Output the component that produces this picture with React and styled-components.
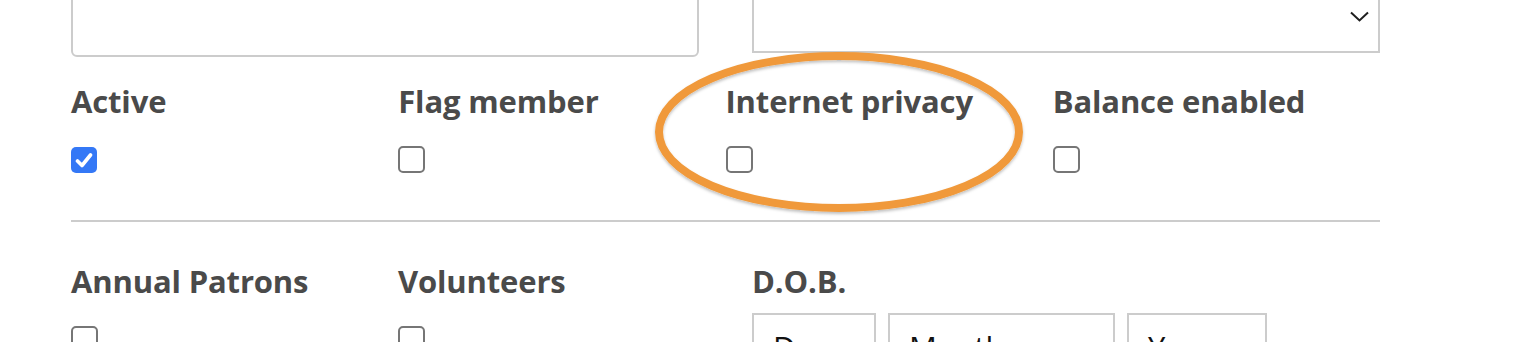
import styled, { createGlobalStyle } from "styled-components";

const GlobalStyle = createGlobalStyle`
  html, body {
    margin: 0;
    padding: 0;
    background: #ffffff;
    overflow: hidden;
  }
  body {
    font-family: "Open Sans", "Liberation Sans", sans-serif;
  }
`;

export default function App() {
  return (
    <Page>
      <GlobalStyle />
      <TopRow>
        <TextArea />
        <SelectBox>
          <svg width="19" height="11" viewBox="0 0 19 11">
            <polyline
              points="1,1.5 9.5,9.5 18,1.5"
              fill="none"
              stroke="#1f1f1f"
              strokeWidth="2"
            />
          </svg>
        </SelectBox>
      </TopRow>

      <FlagRow>
        <Field>
          <Label>Active</Label>
          <Check checked>
            <svg width="18" height="15" viewBox="0 0 18 15">
              <polyline
                points="2.5,8 7,12.5 15.5,2"
                fill="none"
                stroke="#ffffff"
                strokeWidth="3.6"
                strokeLinecap="round"
                strokeLinejoin="round"
              />
            </svg>
          </Check>
        </Field>
        <Field>
          <Label>Flag member</Label>
          <Check />
        </Field>
        <Field>
          <Label>Internet privacy</Label>
          <Check />
        </Field>
        <Field>
          <Label>Balance enabled</Label>
          <Check />
        </Field>
      </FlagRow>

      <Divider />

      <SecondRow>
        <HalfGrid>
          <Field>
            <Label>Annual Patrons</Label>
            <Check />
          </Field>
          <Field>
            <Label>Volunteers</Label>
            <Check />
          </Field>
        </HalfGrid>
        <Field>
          <Label>D.O.B.</Label>
          <DateRow>
            <DateBox width="124px">Day</DateBox>
            <DateBox width="227px">Month</DateBox>
            <DateBox width="140px">Year</DateBox>
          </DateRow>
        </Field>
      </SecondRow>

      <Callout width="1526" height="342" viewBox="0 0 1526 342">
        <defs>
          <filter id="shade" x="-10%" y="-20%" width="120%" height="140%">
            <feDropShadow dx="0" dy="2" stdDeviation="1.5" floodColor="#000" floodOpacity="0.25" />
          </filter>
        </defs>
        <ellipse
          cx="839"
          cy="132"
          rx="180"
          ry="76"
          fill="none"
          stroke="#f0993a"
          strokeWidth="8"
          filter="url(#shade)"
        />
      </Callout>
    </Page>
  );
}

const Page = styled.div`
  position: relative;
  width: 1526px;
  height: 342px;
  overflow: hidden;
  padding-left: 71px;
  box-sizing: border-box;
`;

const TopRow = styled.div`
  width: 1309px;
  margin-top: -20px;
  display: grid;
  grid-template-columns: 1fr 1fr;
  column-gap: 53px;
  align-items: start;
`;

const TextArea = styled.div`
  height: 77px;
  box-sizing: border-box;
  border: 2px solid #cccccc;
  border-radius: 6px;
`;

const SelectBox = styled.div`
  height: 73px;
  box-sizing: border-box;
  border: 2px solid #cccccc;
  display: flex;
  align-items: center;
  justify-content: flex-end;
  padding-right: 9px;
`;

const FlagRow = styled.div`
  width: 1309px;
  margin-top: 22px;
  display: grid;
  grid-template-columns: repeat(4, 1fr);
`;

const Field = styled.div`
  display: flex;
  flex-direction: column;
  align-items: flex-start;
`;

const Label = styled.div`
  font-size: 31px;
  font-weight: 700;
  line-height: 44px;
  letter-spacing: -0.15px;
  color: #4a4a4a;
  white-space: nowrap;
`;

const Check = styled.div`
  width: ${(p) => (p.checked ? "26px" : "27px")};
  height: ${(p) => (p.checked ? "26px" : "27px")};
  box-sizing: border-box;
  margin-top: ${(p) => (p.checked ? "24px" : "23px")};
  border-radius: 5px;
  display: flex;
  align-items: center;
  justify-content: center;
  border: ${(p) => (p.checked ? "none" : "2px solid #767676")};
  background: ${(p) => (p.checked ? "#3478f6" : "#ffffff")};
`;

const Divider = styled.div`
  width: 1309px;
  height: 2px;
  margin-top: 47px;
  background: #cccccc;
`;

const SecondRow = styled.div`
  width: 1309px;
  margin-top: 37px;
  display: grid;
  grid-template-columns: 1fr 1fr;
  column-gap: 53px;
`;

const HalfGrid = styled.div`
  display: grid;
  grid-template-columns: 327px 1fr;
`;

const DateRow = styled.div`
  display: flex;
  gap: 12px;
  margin-top: 10px;
`;

const DateBox = styled.div`
  width: ${(p) => p.width};
  height: 80px;
  box-sizing: border-box;
  border: 2px solid #cccccc;
  padding: 10px 0 0 19px;
  font-size: 31px;
  line-height: 44px;
  color: #111111;
`;

const Callout = styled.svg`
  position: absolute;
  left: 0;
  top: 0;
  pointer-events: none;
`;
